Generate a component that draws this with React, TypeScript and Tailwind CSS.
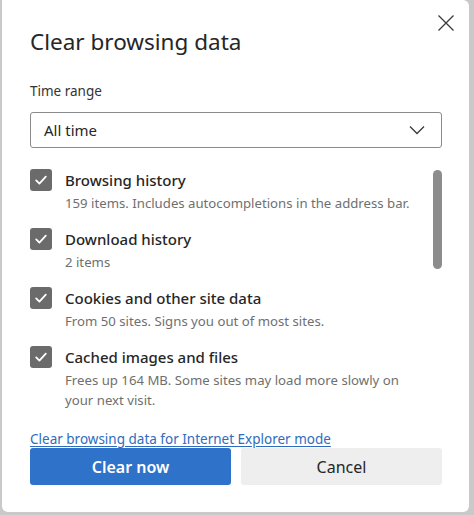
import React from "react";

const Check = () => (
  <div className="w-[22px] h-[22px] rounded-[3px] bg-[#6b6b6b] flex items-center justify-center shrink-0">
    <svg width="14" height="14" viewBox="0 0 14 14" fill="none">
      <path d="M2.2 7.4 L5.4 10.6 L11.8 3.6" stroke="#ffffff" strokeWidth="1.8" strokeLinecap="round" strokeLinejoin="round" />
    </svg>
  </div>
);

const Item = ({ title, desc }: { title: string; desc: React.ReactNode }) => (
  <div className="flex gap-[13px]">
    <Check />
    <div className="flex flex-col">
      <div className="text-[15px] leading-[22px] font-medium text-[#262626]">{title}</div>
      <div className="text-[13.2px] leading-[20px] text-[#6f6f6f] mt-[2px]">{desc}</div>
    </div>
  </div>
);

export default function App() {
  return (
    <div
      className="w-[474px] h-[515px] bg-[#c9c9c9] pl-[2px] pr-[5px] pb-[3px]"
      style={{ fontFamily: '"Noto Sans", "Open Sans", sans-serif' }}
    >
      <div className="relative w-full h-full bg-white rounded-b-[6px] rounded-tr-[6px] pl-[28px] pr-[27px]">
        <svg className="absolute left-[435px] top-[14px]" width="18" height="18" viewBox="0 0 18 18" fill="none">
          <path d="M1.5 1.5 L16.5 16.5 M16.5 1.5 L1.5 16.5" stroke="#3a3a3a" strokeWidth="1.3" />
        </svg>
        <div className="pt-[27px] text-[22.5px] leading-[30px] text-[#262626]">Clear browsing data</div>
        <div className="mt-[24px] text-[13.5px] leading-[20px] text-[#333]">Time range</div>
        <div className="mt-[11px] h-[36px] border border-[#8a8a8a] rounded-[3px] flex items-center justify-between pl-[13px] pr-[16px]">
          <span className="text-[15px] text-[#262626]">All time</span>
          <svg width="16" height="10" viewBox="0 0 16 10" fill="none">
            <path d="M1 1.5 L8 8.5 L15 1.5" stroke="#3a3a3a" strokeWidth="1.3" />
          </svg>
        </div>
        <div className="relative mt-[21px] h-[245px]">
          <div className="absolute right-0 top-[1px] w-[9px] h-[99px] rounded-full bg-[#8c8c8c]" />
          <div className="flex flex-col gap-[15px] pr-[20px]">
            <Item title="Browsing history" desc="159 items. Includes autocompletions in the address bar." />
            <Item title="Download history" desc="2 items" />
            <Item title="Cookies and other site data" desc="From 50 sites. Signs you out of most sites." />
            <Item title="Cached images and files" desc="Frees up 164 MB. Some sites may load more slowly on your next visit." />
          </div>
        </div>
        <a className="block mt-[16px] w-fit text-[13.5px] leading-[18px] text-[#2f6cc0] underline underline-offset-[2px]">
          Clear browsing data for Internet Explorer mode
        </a>
        <div className="flex gap-[10px] mt-[0px]">
          <button className="flex-1 h-[37px] rounded-[3px] bg-[#2f72c9] text-white text-[16px] font-semibold">Clear now</button>
          <button className="flex-1 h-[37px] rounded-[3px] bg-[#eeeeee] text-[#262626] text-[16px]">Cancel</button>
        </div>
      </div>
    </div>
  );
}
